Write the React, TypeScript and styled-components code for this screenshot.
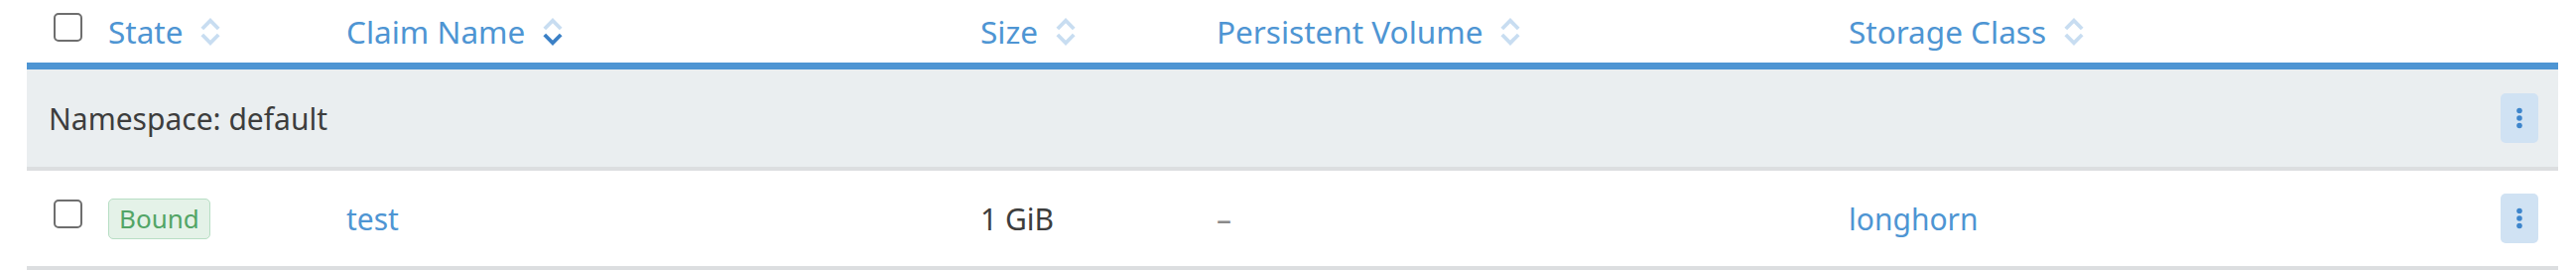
import React from "react";
import styled, { createGlobalStyle } from "styled-components";

const GlobalStyle = createGlobalStyle`
  html, body {
    margin: 0;
    padding: 0;
    background: #ffffff;
    font-family: "Noto Sans", "Open Sans", "Liberation Sans", sans-serif;
  }
`;

const Page = styled.div`
  width: 2596px;
  height: 272px;
  padding-left: 27px;
  box-sizing: border-box;
  overflow: hidden;
`;

const Table = styled.div`
  width: 2551px;
`;

const Row = styled.div<{ $height: number }>`
  display: grid;
  grid-template-columns: 82px 240px 639px 238px 637px 1fr 68px;
  align-items: center;
  height: ${(p) => p.$height}px;
`;

const HeaderRow = styled(Row)`
  border-bottom: 7px solid #4e95d3;
`;

const DataRow = styled(Row)`
  border-bottom: 4px solid #dcdee0;
`;

const GroupRow = styled.div`
  display: flex;
  align-items: center;
  justify-content: space-between;
  height: 98px;
  padding: 0 20px 0 22px;
  background: #eaeef0;
  border-bottom: 4px solid #dcdee0;
  font-size: 30px;
  color: #3d3d3d;
`;

const CheckCell = styled.div`
  padding-left: 27px;
  display: flex;
  align-items: center;
`;

const Checkbox = styled.span<{ $offset?: number }>`
  display: block;
  width: 29px;
  height: 29px;
  box-sizing: border-box;
  border: 2.5px solid #6e6e6e;
  border-radius: 5px;
  background: #fff;
  margin-top: ${(p) => p.$offset ?? 0}px;
`;

const HeadCell = styled.div`
  display: flex;
  align-items: center;
  gap: 18px;
  font-size: 31.5px;
  color: #4e95d3;
  white-space: nowrap;
`;

const Cell = styled.div<{ $tone?: "link" | "text" | "muted" }>`
  font-size: 30px;
  white-space: nowrap;
  color: ${(p) =>
    p.$tone === "link" ? "#4e95d3" : p.$tone === "muted" ? "#8a8a8a" : "#3d3d3d"};
`;

const Badge = styled.span`
  display: inline-flex;
  align-items: center;
  height: 41px;
  padding: 0 10px;
  box-sizing: border-box;
  border: 1.5px solid #b7dec4;
  border-radius: 5px;
  background: #e4f2e8;
  color: #52a566;
  font-size: 26px;
`;

const ActionCell = styled.div`
  display: flex;
  justify-content: flex-end;
  padding-right: 20px;
`;

const ActionButton = styled.button`
  display: flex;
  align-items: center;
  justify-content: center;
  width: 38px;
  height: 50px;
  padding: 0;
  border: none;
  border-radius: 5px;
  background: #d0e2f3;
`;

const Dots = () => (
  <svg width="8" height="22" viewBox="0 0 8 22">
    <circle cx="4" cy="3.5" r="2.8" fill="#3d85cc" />
    <circle cx="4" cy="11" r="2.8" fill="#3d85cc" />
    <circle cx="4" cy="18.5" r="2.8" fill="#3d85cc" />
  </svg>
);

const SortIcon = ({ active }: { active?: boolean }) => (
  <svg width="20" height="30" viewBox="0 0 20 30">
    <path d="M1.8 12 L10 3.6 L18.2 12" fill="none" stroke="#c8ddf1" strokeWidth="3.8" />
    <path
      d="M1.8 18 L10 26.4 L18.2 18"
      fill="none"
      stroke={active ? "#3b80c6" : "#c8ddf1"}
      strokeWidth="3.8"
    />
  </svg>
);

const columns = [
  { label: "State" },
  { label: "Claim Name", active: true },
  { label: "Size" },
  { label: "Persistent Volume" },
  { label: "Storage Class" },
];

export default function App() {
  return (
    <Page>
      <GlobalStyle />
      <Table>
        <HeaderRow $height={63}>
          <CheckCell>
            <Checkbox $offset={-8} />
          </CheckCell>
          {columns.map((c) => (
            <HeadCell key={c.label}>
              {c.label}
              <SortIcon active={c.active} />
            </HeadCell>
          ))}
          <div />
        </HeaderRow>
        <GroupRow>
          <span>Namespace: default</span>
          <ActionButton>
            <Dots />
          </ActionButton>
        </GroupRow>
        <DataRow $height={96}>
          <CheckCell>
            <Checkbox $offset={-10} />
          </CheckCell>
          <div>
            <Badge>Bound</Badge>
          </div>
          <Cell $tone="link">test</Cell>
          <Cell>1 GiB</Cell>
          <Cell $tone="muted">–</Cell>
          <Cell $tone="link">longhorn</Cell>
          <ActionCell>
            <ActionButton>
              <Dots />
            </ActionButton>
          </ActionCell>
        </DataRow>
      </Table>
    </Page>
  );
}
